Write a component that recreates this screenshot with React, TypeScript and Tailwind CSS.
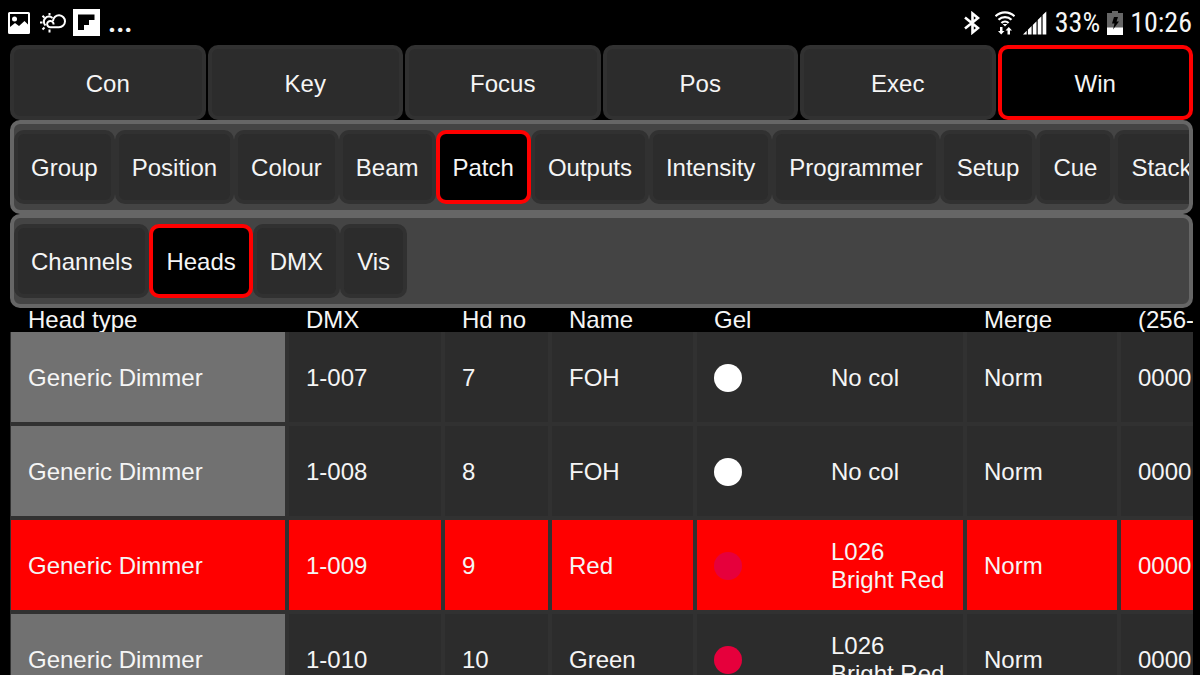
import { useState } from "react";

interface Head {
  type: string;
  dmx: string;
  no: number;
  name: string;
  color: string;
  gel: string[];
  merge: string;
  mode: string;
}

const mainTabs = ["Con", "Key", "Focus", "Pos", "Exec", "Win"];
const windows = [
  "Group",
  "Position",
  "Colour",
  "Beam",
  "Patch",
  "Outputs",
  "Intensity",
  "Programmer",
  "Setup",
  "Cue",
  "Stack",
];
const patchTabs = ["Channels", "Heads", "DMX", "Vis"];

const columns = [
  { label: "Head type", width: "w-[279px]" },
  { label: "DMX", width: "w-[156px]" },
  { label: "Hd no", width: "w-[107px]" },
  { label: "Name", width: "w-[145px]" },
  { label: "Gel", width: "w-[270px]" },
  { label: "Merge", width: "w-[154px]" },
  { label: "(256-", width: "w-[100px]" },
];

const heads: Head[] = [
  { type: "Generic Dimmer", dmx: "1-007", no: 7, name: "FOH", color: "#ffffff", gel: ["No col"], merge: "Norm", mode: "0000" },
  { type: "Generic Dimmer", dmx: "1-008", no: 8, name: "FOH", color: "#ffffff", gel: ["No col"], merge: "Norm", mode: "0000" },
  { type: "Generic Dimmer", dmx: "1-009", no: 9, name: "Red", color: "#e6003c", gel: ["L026", "Bright Red"], merge: "Norm", mode: "0000" },
  { type: "Generic Dimmer", dmx: "1-010", no: 10, name: "Green", color: "#e6003c", gel: ["L026", "Bright Red"], merge: "Norm", mode: "0000" },
];

function TabButton({ label, active, onClick }: { label: string; active: boolean; onClick: () => void }) {
  return (
    <button
      type="button"
      aria-pressed={active}
      onClick={onClick}
      className={`shrink-0 cursor-pointer rounded-[10px] border-4 px-[13px] pt-0.5 ${
        active ? "border-[#ff0000] bg-black" : "border-[#313131] bg-[#2c2c2c]"
      }`}
    >
      {label}
    </button>
  );
}

function StatusBar() {
  return (
    <div className="flex h-[45px] items-center justify-between pl-2 pr-2 font-['Roboto_Condensed','Liberation_Sans_Narrow',Roboto,sans-serif] text-[28px] leading-7">
      <div className="flex items-center">
        {/* Picture */}
        <svg width="22" height="22" viewBox="0 0 22 22" className="mr-2.5">
          <path
            fill="#fff"
            fillRule="evenodd"
            d="M1.5 0h19A1.5 1.5 0 0 1 22 1.5v19a1.5 1.5 0 0 1-1.5 1.5h-19A1.5 1.5 0 0 1 0 20.5v-19A1.5 1.5 0 0 1 1.5 0zM2 2v13l5-4 4 3 5.500-5 3.500 3.500V2z"
          />
          <circle cx="6.5" cy="7" r="2.5" fill="#fff" />
        </svg>
        {/* Weather */}
        <svg width="26" height="22" viewBox="0 0 26 22" fill="none" stroke="#fff" strokeWidth="2" className="mr-[7px]">
          <path d="M13.500 12.500a3.200 3.200 0 1 0-3.200 2.800H19a6 6 0 1 0-6-6.500" />
          <path d="M5.500 13.500A4.800 4.800 0 0 1 12.500 6" />
          <path d="M9.500 1v2.500M9.500 17.500v3M0 10.500h2.500M2.500 3.800l2 2M2.500 17.500l2-2" />
        </svg>
        {/* Flipboard */}
        <svg width="27" height="27" viewBox="0 0 27 27" className="mr-2">
          <path fill="#fff" d="M0 0h27v27H0z" />
          <path fill="#000" d="M5 5.500h16.500v5.500H16v5h-5v5H5z" />
        </svg>
        <span className="font-bold">...</span>
      </div>
      <div className="flex items-center">
        {/* Bluetooth */}
        <svg width="16" height="24" viewBox="0 0 16 24" fill="none" stroke="#fff" strokeWidth="2.6" className="mr-[15px]">
          <path d="M1 6.500l13 10.500-5.500 4.500v-19L14 7 1 17.500" />
        </svg>
        {/* Wifi */}
        <svg width="20" height="24" viewBox="0 0 20 24" className="mr-2">
          <g fill="none" stroke="#fff" strokeWidth="2.2">
            <path d="M.5 5.200a13.500 13.500 0 0 1 19 0M3.500 8.800a9.200 9.200 0 0 1 13 0M6.400 12a5.200 5.200 0 0 1 7.200 0" />
          </g>
          <path fill="#fff" d="M7.700 13h4.600L10 15.500zM5 16h2.500v4H9.500L6.200 23.500 3 20h2zM12.500 23.500V19.500h-2L13.800 16l3.200 3.500h-2v4z" />
        </svg>
        {/* Signal */}
        <svg width="24" height="24" viewBox="0 0 24 24" fill="#fff" className="mr-2">
          <path d="M0 23.500l3.700-3.700v3.700zM4.900 18.800l3.700-3.700v8.400H4.900zM9.800 13.900l3.700-3.700v13.300H9.800zM14.700 9l3.700-3.700v18.200h-3.700zM19.600 4.100L23.300.4v23.100h-3.700z" />
        </svg>
        <span>33%</span>
        {/* Battery, charging */}
        <svg width="16" height="24" viewBox="0 0 16 24" className="mx-[7px]">
          <path fill="#666" d="M5 0h6v2h5v15H0V2h5z" />
          <path fill="#fff" d="M0 16.500h16V24H0z" />
          <path fill="#000" d="M7 6h4L9.500 10.500H12L6 18.500l1.500-6H5z" />
        </svg>
        <span>10:26</span>
      </div>
    </div>
  );
}

export default function App() {
  const [mainTab, setMainTab] = useState("Win");
  const [win, setWin] = useState("Patch");
  const [patchTab, setPatchTab] = useState("Heads");
  const [selected, setSelected] = useState(9);

  return (
    <div className="flex h-screen flex-col overflow-hidden bg-black font-['Liberation_Sans',Arial,sans-serif] text-2xl leading-7 text-[#f5f5f5]">
      <StatusBar />

      <main className="flex min-h-0 flex-1 flex-col pl-2.5 pr-[7px]">
        {/* Main tabs */}
        <nav className="grid h-[75px] shrink-0 grid-cols-6 gap-0.5">
          {mainTabs.map((t) => (
            <TabButton key={t} label={t} active={t === mainTab} onClick={() => setMainTab(t)} />
          ))}
        </nav>

        {/* Windows */}
        <nav className="flex h-[94px] shrink-0 overflow-hidden rounded-[10px] border-4 border-[#666] bg-[#444] py-1.5">
          {windows.map((t) => (
            <TabButton key={t} label={t} active={t === win} onClick={() => setWin(t)} />
          ))}
        </nav>

        {/* Patch views */}
        <nav className="flex h-[94px] shrink-0 overflow-hidden rounded-[10px] border-4 border-[#666] bg-[#444] py-1.5">
          {patchTabs.map((t) => (
            <TabButton key={t} label={t} active={t === patchTab} onClick={() => setPatchTab(t)} />
          ))}
        </nav>

        {/* Heads */}
        <div className="min-h-0 flex-1 overflow-hidden">
          <table className="w-[1211px] table-fixed border-separate border-spacing-0 text-left">
            <thead>
              <tr>
                {columns.map((c) => (
                  <th key={c.label} scope="col" className={`${c.width} p-0 font-normal first:pl-px`}>
                    <div className="h-6 overflow-hidden pl-[17px] leading-6">{c.label}</div>
                  </th>
                ))}
              </tr>
            </thead>
            <tbody>
              {heads.map((h) => {
                const active = h.no === selected;
                const cell = `border-b-4 border-r-4 border-[#313131] pb-0 pl-[17px] pr-0 pt-0.5 ${active ? "bg-[#ff0000]" : "bg-[#2c2c2c]"}`;
                return (
                  <tr key={h.no} onClick={() => setSelected(h.no)} className="h-[94px] cursor-pointer">
                    <td
                      className={`border-b-4 border-l border-r-4 border-[#313131] pb-0 pl-[17px] pr-0 pt-0.5 ${
                        active ? "bg-[#ff0000]" : "bg-[#717171]"
                      }`}
                    >
                      {h.type}
                    </td>
                    <td className={cell}>{h.dmx}</td>
                    <td className={cell}>{h.no}</td>
                    <td className={cell}>{h.name}</td>
                    <td className={cell}>
                      <div className="flex items-center">
                        <div className="w-[117px] shrink-0">
                          <div className="size-7 rounded-full" style={{ backgroundColor: h.color }} />
                        </div>
                        <div className="whitespace-nowrap">
                          {h.gel.map((line) => (
                            <div key={line}>{line}</div>
                          ))}
                        </div>
                      </div>
                    </td>
                    <td className={cell}>{h.merge}</td>
                    <td className={cell}>{h.mode}</td>
                  </tr>
                );
              })}
            </tbody>
          </table>
        </div>
      </main>
    </div>
  );
}
